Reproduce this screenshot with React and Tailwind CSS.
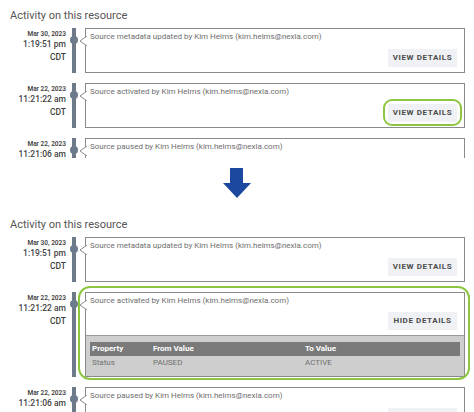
import React from "react";

const FONT = { fontFamily: "Roboto, 'Liberation Sans', sans-serif" };

function Notch() {
  return (
    <svg className="absolute left-[-7px] top-[7px]" width="8" height="10" viewBox="0 0 8 10">
      <path d="M8 0 L1 5 L8 10 Z" fill="#ffffff" />
      <path d="M8 0 L1 5 L8 10" fill="none" stroke="#8a8a8a" strokeWidth="1" />
    </svg>
  );
}

function DetailsButton({ label }) {
  return (
    <div className="w-[69px] h-[18px] bg-[#eff1f4] flex items-center justify-center text-[8px] font-bold tracking-[0.6px] text-[#4b4b4b]">
      {label}
    </div>
  );
}

function Row({ date, time, tz, children }) {
  return (
    <div className="flex pb-[10px]">
      <div className="w-[66px] shrink-0 flex flex-col items-end text-[#3f3f3f]">
        <div className="text-[6.5px] leading-[8px] pt-[1.5px] font-semibold">{date}</div>
        <div className="text-[8.5px] leading-[13px] font-medium">{time}</div>
        <div className="text-[8.5px] leading-[13.5px] font-medium">{tz}</div>
      </div>
      <div className="w-[19px] shrink-0 relative flex">
        <div className="ml-[6px] w-[4px] bg-[#6c7a8a]" />
        <div className="absolute left-[4px] top-[8px] w-[8px] h-[8px] rounded-full bg-[#6c7a8a]" />
      </div>
      <div className="flex-1 mr-[9px] relative">{children}</div>
    </div>
  );
}

function Card({ text, button = "VIEW DETAILS", ring = false }) {
  return (
    <div className="relative border border-[#8a8a8a] bg-white flex flex-col">
      <Notch />
      <div className="pt-[3px] px-[4px] text-[8px] leading-[10px] text-[#6e6e6e]">{text}</div>
      <div className="flex justify-end pr-[7px] mt-[7px] pb-[5px]">
        <div className="relative">
          <DetailsButton label={button} />
          {ring && (
            <div className="absolute -left-[5px] -right-[5px] -top-[5px] -bottom-[4px] rounded-[9px] border-[2.5px] border-[#8cc540]" />
          )}
        </div>
      </div>
    </div>
  );
}

function ExpandedCard({ text }) {
  return (
    <div className="relative border border-[#8a8a8a] bg-white flex flex-col">
      <Notch />
      <div className="pt-[3px] px-[4px] text-[8px] leading-[10px] text-[#6e6e6e]">{text}</div>
      <div className="flex justify-end pr-[7px] mt-[6px] pb-[5px]">
        <DetailsButton label="HIDE DETAILS" />
      </div>
      <div className="border-t border-[#9a9a9a] bg-[#cecece] px-[4px] pt-[6px] pb-[7px]">
        <div className="grid grid-cols-[61px_152px_1fr] text-[8px]">
          <div className="bg-[#7a7a7a] h-[14px] flex items-center pl-[2px] font-bold text-white">Property</div>
          <div className="bg-[#7a7a7a] h-[14px] flex items-center pl-[2px] font-bold text-white">From Value</div>
          <div className="bg-[#7a7a7a] h-[14px] flex items-center pl-[2px] font-bold text-white">To Value</div>
          <div className="h-[13px] flex items-center pl-[2px] text-[#707070]">Status</div>
          <div className="h-[13px] flex items-center pl-[2px] text-[#707070]">PAUSED</div>
          <div className="h-[13px] flex items-center pl-[2px] text-[#707070]">ACTIVE</div>
        </div>
      </div>
    </div>
  );
}

function Title() {
  return (
    <div className="h-[28px] pt-[9px] pl-[10px] text-[11px] leading-[13px] text-[#555555]">
      Activity on this resource
    </div>
  );
}

const T1 = "Source metadata updated by Kim Helms (kim.helms@nexla.com)";
const T2 = "Source activated by Kim Helms (kim.helms@nexla.com)";
const T3 = "Source paused by Kim Helms (kim.helms@nexla.com)";

export default function App() {
  return (
    <div className="w-[474px] h-[412px] overflow-hidden bg-white flex flex-col" style={FONT}>
      <div className="h-[158px] shrink-0 overflow-hidden">
        <Title />
        <Row date="Mar 30, 2023" time="1:19:51 pm" tz="CDT">
          <Card text={T1} />
        </Row>
        <Row date="Mar 22, 2023" time="11:21:22 am" tz="CDT">
          <Card text={T2} ring />
        </Row>
        <Row date="Mar 22, 2023" time="11:21:06 am" tz="CDT">
          <Card text={T3} />
        </Row>
      </div>
      <div className="h-[51px] shrink-0 flex justify-center pt-[10px]">
        <svg width="28" height="31" viewBox="0 0 28 31">
          <path d="M7 0 H20 V15 H28 L14 30 L0 15 H7 Z" fill="#1c489f" />
        </svg>
      </div>
      <div className="flex-1 overflow-hidden">
        <Title />
        <Row date="Mar 30, 2023" time="1:19:51 pm" tz="CDT">
          <Card text={T1} />
        </Row>
        <Row date="Mar 22, 2023" time="11:21:22 am" tz="CDT">
          <ExpandedCard text={T2} />
          <div className="absolute -left-[7px] -right-[5px] -top-[6px] -bottom-[3px] rounded-[12px] border-[2.5px] border-[#8cc540] pointer-events-none" />
        </Row>
        <Row date="Mar 22, 2023" time="11:21:06 am" tz="CDT">
          <Card text={T3} />
        </Row>
      </div>
    </div>
  );
}
